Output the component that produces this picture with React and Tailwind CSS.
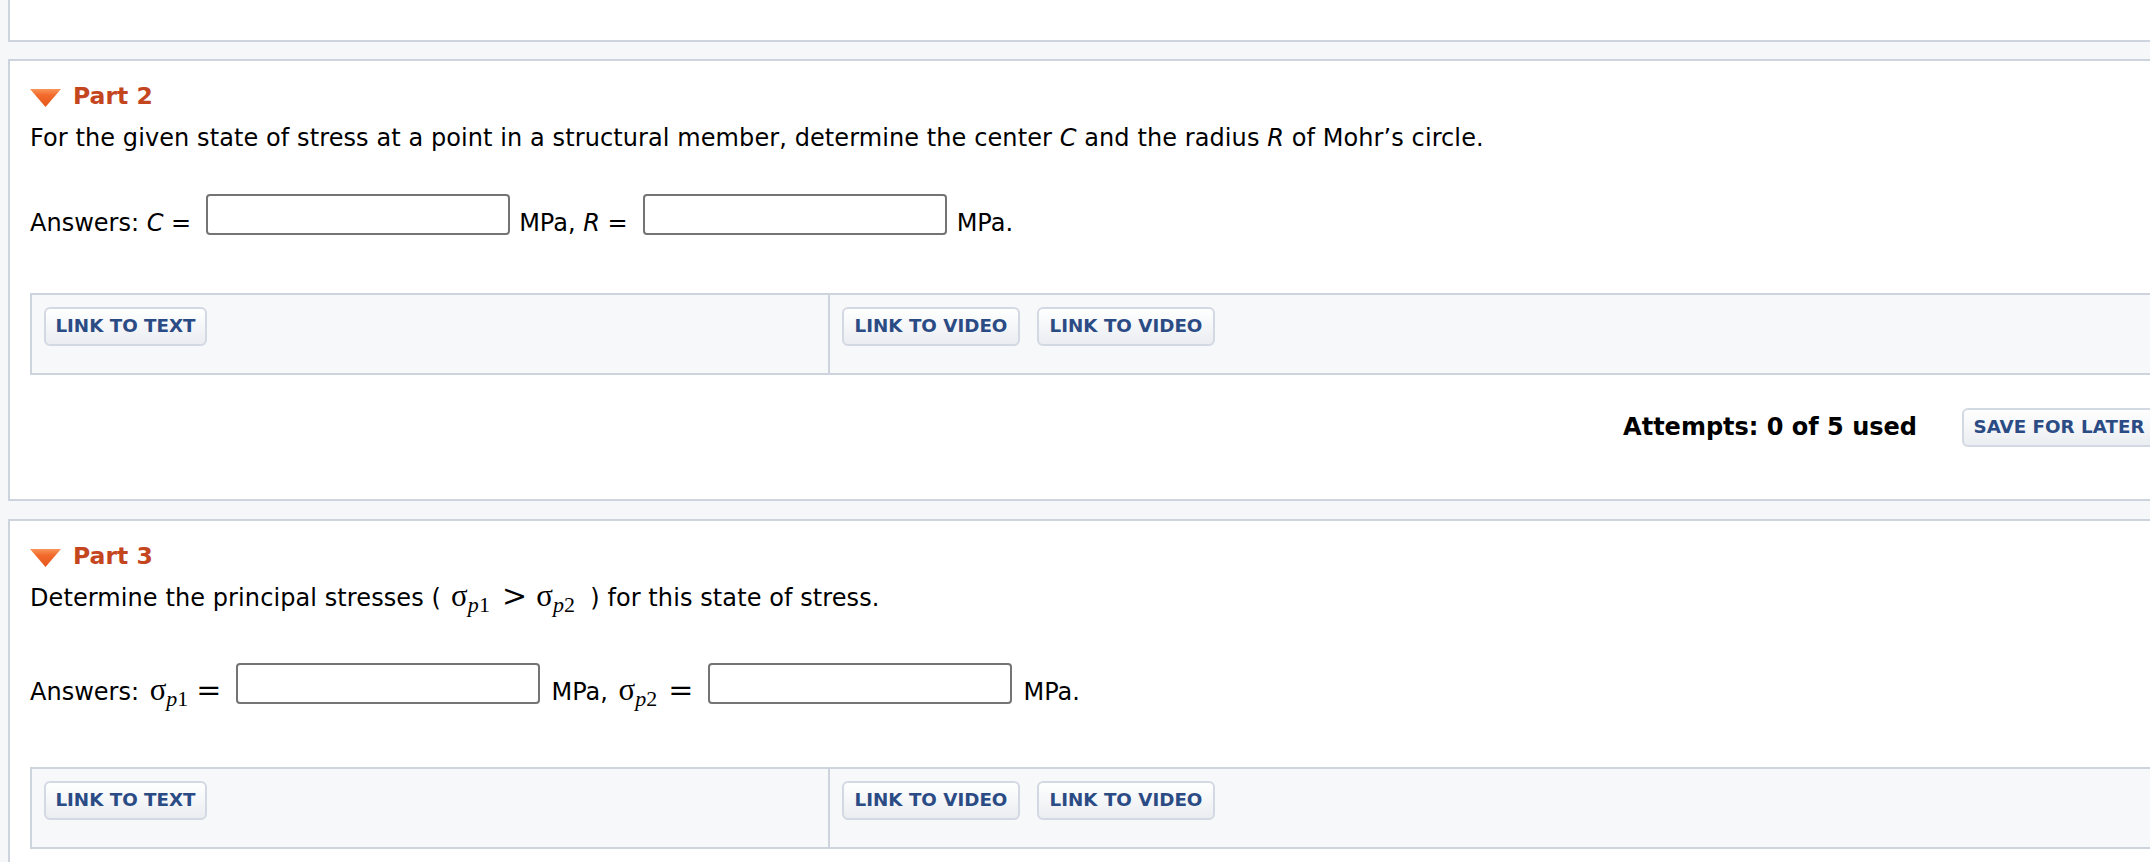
import React from "react";

function Caret() {
  return (
    <svg width="31" height="18" viewBox="0 0 31 18" className="mt-[3px] shrink-0">
      <defs>
        <linearGradient id="caretGrad" x1="0" y1="0" x2="0" y2="1">
          <stop offset="0" stopColor="#f8955a" />
          <stop offset="0.35" stopColor="#f26a2b" />
          <stop offset="1" stopColor="#e4561c" />
        </linearGradient>
      </defs>
      <polygon points="0,0 31,0 15.5,18" fill="url(#caretGrad)" />
    </svg>
  );
}

function Btn({ children, className }) {
  return (
    <button
      type="button"
      className={
        "h-[39px] shrink-0 rounded-[6px] border-2 border-[#d3d9e2] bg-linear-to-b from-white to-[#eaedf1] text-center text-[18.3px] leading-none font-bold text-[#2b4b85] " +
        className
      }
    >
      {children}
    </button>
  );
}

function Field({ className }) {
  return (
    <input
      type="text"
      className={
        "h-[41px] w-[304px] shrink-0 rounded-[4px] border-2 border-[#747474] bg-white " +
        className
      }
    />
  );
}

function Sig({ n, className }) {
  return (
    <span className={"font-['Liberation_Serif',serif] text-[31px] leading-[24px] " + className}>
      σ
      <sub className="text-[22px]">
        <i>p</i>
        {n}
      </sub>
    </span>
  );
}

function Header({ children }) {
  return (
    <div className="mt-[19px] flex h-[32px] items-center gap-[12px]">
      <Caret />
      <span className="text-[23.5px] leading-[32px] font-bold text-[#c4461f]">{children}</span>
    </div>
  );
}

function LinkPanel({ className }) {
  return (
    <div className={"flex h-[82px] border-2 border-[#cdd4de] bg-[#f7f8fa] " + className}>
      <div className="w-[798px] shrink-0 border-r-2 border-[#cdd4de] p-[12px]">
        <Btn className="w-[163px]">LINK TO TEXT</Btn>
      </div>
      <div className="flex gap-[17px] p-[12px]">
        <Btn className="w-[178px]">LINK TO VIDEO</Btn>
        <Btn className="w-[178px]">LINK TO VIDEO</Btn>
      </div>
    </div>
  );
}

export default function App() {
  return (
    <div className="h-[862px] w-[2150px] overflow-hidden bg-[#f6f7f9] pl-[8px] text-black font-['DejaVu_Sans','Verdana',sans-serif]">
      {/* previous part (cut off at the top) */}
      <div className="h-[42px] w-[2170px] border-b-2 border-l-2 border-[#cdd4de] bg-white" />

      {/* Part 2 */}
      <div className="mt-[17px] w-[2170px] border-2 border-[#cdd4de] bg-white px-[20px] pb-[52px]">
        <Header>Part 2</Header>
        <div className="mt-[10px] h-[32px] text-[24px] leading-[32px] tracking-[0.09px]">
          For the given state of stress at a point in a structural member, determine the center <i>C</i> and the radius <i>R</i> of Mohr’s circle.
        </div>
        <div className="mt-[40px] flex h-[41px] items-end text-[24px] leading-[24px]">
          <span className="whitespace-pre">
            Answers: <i>C</i> =
          </span>
          <Field className="ml-[15px]" />
          <span className="ml-[9px] whitespace-pre">
            MPa, <i>R</i> =
          </span>
          <Field className="ml-[15px]" />
          <span className="ml-[10px]">MPa.</span>
        </div>
        <LinkPanel className="mt-[58px]" />
        <div className="mt-[33px] flex h-[39px] items-center justify-end">
          <span className="text-[24px] leading-[39px] font-bold">Attempts: 0 of 5 used</span>
          <Btn className="ml-[45px] w-[194px]">SAVE FOR LATER</Btn>
        </div>
      </div>

      {/* Part 3 */}
      <div className="mt-[18px] w-[2170px] border-2 border-[#cdd4de] bg-white px-[20px] pb-[60px]">
        <Header>Part 3</Header>
        <div className="mt-[10px] h-[32px] whitespace-pre text-[24px] leading-[32px] tracking-[0.09px]">
          Determine the principal stresses (<Sig n="1" className="ml-[10px]" />
          <span className="ml-[12px] mr-[9px] font-['DejaVu_Serif',serif] text-[30px] leading-[24px]">&gt;</span>
          <Sig n="2" />
          <span className="ml-[15px]">) for this state of stress.</span>
        </div>
        <div className="mt-[49px] flex h-[41px] items-end text-[24px] leading-[24px]">
          <span className="whitespace-pre">
            Answers: <Sig n="1" className="ml-[3px]" />
            <span className="ml-[8px] font-['DejaVu_Serif',serif] text-[30px] leading-[24px]">=</span>
          </span>
          <Field className="ml-[15px]" />
          <span className="ml-[11px] whitespace-pre">
            MPa, <Sig n="2" className="ml-[3px]" />
            <span className="ml-[11px] font-['DejaVu_Serif',serif] text-[30px] leading-[24px]">=</span>
          </span>
          <Field className="ml-[15px]" />
          <span className="ml-[11px]">MPa.</span>
        </div>
        <LinkPanel className="mt-[63px]" />
      </div>
    </div>
  );
}
